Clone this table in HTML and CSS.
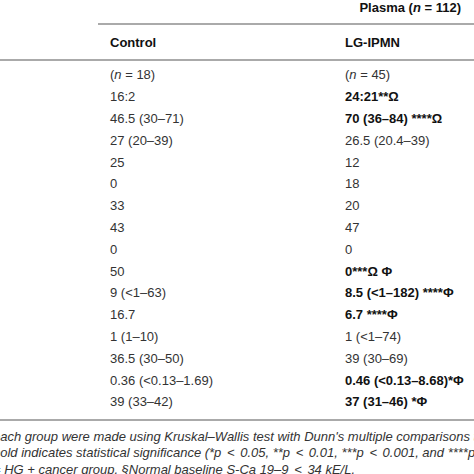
FILE: index.html
```html
<!DOCTYPE html>
<html>
<head>
<meta charset="utf-8">
<link rel="stylesheet" href="styles.css">
</head>
<body>
<div class="page">
  <div class="group-head"><span class="group-title">Plasma (<i>n</i> = 112)</span></div>
  <div class="col-head">
    <div class="c-label"></div>
    <div class="c-ctrl">Control</div>
    <div class="c-lg">LG-IPMN</div>
  </div>
  <div class="body">
    <div class="row"><div></div><div>(<i>n</i> = 18)</div><div>(<i>n</i> = 45)</div></div>
    <div class="row"><div></div><div>16:2</div><div class="b">24:21**Ω</div></div>
    <div class="row"><div></div><div>46.5 (30–71)</div><div class="b">70 (36–84) ****Ω</div></div>
    <div class="row"><div></div><div>27 (20–39)</div><div>26.5 (20.4–39)</div></div>
    <div class="row"><div></div><div>25</div><div>12</div></div>
    <div class="row"><div></div><div>0</div><div>18</div></div>
    <div class="row"><div></div><div>33</div><div>20</div></div>
    <div class="row"><div></div><div>43</div><div>47</div></div>
    <div class="row"><div></div><div>0</div><div>0</div></div>
    <div class="row"><div></div><div>50</div><div class="b">0***Ω Φ</div></div>
    <div class="row"><div></div><div>9 (&lt;1–63)</div><div class="b">8.5 (&lt;1–182) ****Φ</div></div>
    <div class="row"><div></div><div>16.7</div><div class="b">6.7 ****Φ</div></div>
    <div class="row"><div></div><div>1 (1–10)</div><div>1 (&lt;1–74)</div></div>
    <div class="row"><div></div><div>36.5 (30–50)</div><div>39 (30–69)</div></div>
    <div class="row"><div></div><div>0.36 (&lt;0.13–1.69)</div><div class="b">0.46 (&lt;0.13–8.68)*Φ</div></div>
    <div class="row"><div></div><div>39 (33–42)</div><div class="b">37 (31–46) *Φ</div></div>
  </div>
  <div class="notes">
    <p>each group were made using Kruskal–Wallis test with Dunn's multiple comparisons test.</p>
    <p>bold indicates statistical significance (*p <span class="op">&lt;</span> 0.05, **p <span class="op">&lt;</span> 0.01, ***p <span class="op">&lt;</span> 0.001, and ****p <span class="op">&lt;</span> 0.0001).</p>
    <p>= HG + cancer group. §Normal baseline S-Ca 19–9 <span class="op">&lt;</span> 34 kE/L.</p>
  </div>
</div>
</body>
</html>
```
FILE: styles.css
```css
html, body {
  margin: 0;
  padding: 0;
  background: #fff;
}
.page {
  width: 474px;
  height: 474px;
  overflow: hidden;
  font-family: "Liberation Sans", Arial, sans-serif;
  font-size: 13px;
  color: #333;
}
.group-head {
  height: 23px;
  display: flex;
  justify-content: flex-end;
  align-items: flex-start;
  padding-right: 13px;
  border-bottom: 2px solid #aaa;
  margin-left: 98px;
}
.group-title {
  font-weight: bold;
  color: #111;
  line-height: 14px;
  margin-top: 1px;
}
.col-head {
  display: grid;
  grid-template-columns: 110px 235px 1fr;
  height: 34px;
  align-items: center;
  font-weight: bold;
  color: #111;
  border-bottom: 2px solid #aaa;
}
.body {
  padding: 3px 0 6px;
  border-bottom: 2px solid #aaa;
}
.row {
  display: grid;
  grid-template-columns: 110px 235px 1fr;
  height: 21.8px;
  align-items: center;
  white-space: nowrap;
}
.b {
  font-weight: bold;
  color: #111;
}
.notes {
  margin-left: -7px;
  padding-top: 8px;
  font-style: italic;
  white-space: nowrap;
  color: #333;
}
.notes p {
  margin: 0;
  line-height: 16.5px;
}
.op {
  margin: 0 2px;
}
```
